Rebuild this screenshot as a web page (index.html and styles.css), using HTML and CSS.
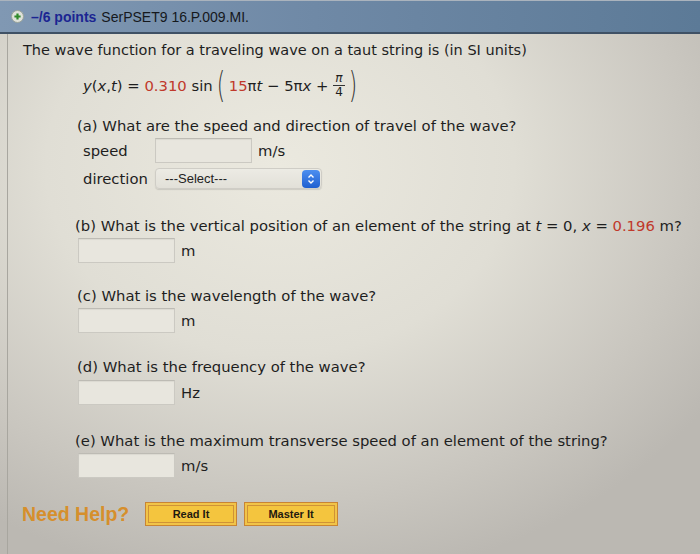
FILE: index.html
```html
<!DOCTYPE html>
<html>
<head>
<meta charset="utf-8">
<link rel="stylesheet" href="styles.css">
</head>
<body>
<div class="header">
  <span class="plus"><svg width="13" height="13" viewBox="0 0 13 13"><circle cx="6.5" cy="6.5" r="6" fill="#dfe2da" stroke="#9aa39a" stroke-width="1"/><path d="M6.5 3.4v6.2M3.4 6.5h6.2" stroke="#2f8a2a" stroke-width="2.2"/></svg></span>
  <span class="pts">–/6 points</span>
  <span class="code">SerPSET9 16.P.009.MI.</span>
</div>
<div class="main">
  <p class="intro">The wave function for a traveling wave on a taut string is (in SI units)</p>
  <div class="eq">
    <span><i>y</i>(<i>x</i>,<i>t</i>) = <span class="red">0.310</span> sin</span>
    <span class="paren">(</span>
    <span><span class="red">15</span>π<i>t</i> − 5π<i>x</i> +</span>
    <span class="frac"><span class="num">π</span><span class="den">4</span></span>
    <span class="paren">)</span>
  </div>

  <div class="part pa">
    <div class="q">(a) What are the speed and direction of travel of the wave?</div>
    <div class="row r-speed"><span class="lbl">speed</span><span class="inp"></span><span class="unit">m/s</span></div>
    <div class="row r-dir"><span class="lbl">direction</span><span class="sel"><span class="seltext">---Select---</span><span class="step"><svg width="8" height="12" viewBox="0 0 8 12"><path d="M1.5 4.5L4 2L6.5 4.5M1.5 7.5L4 10L6.5 7.5" fill="none" stroke="#fff" stroke-width="1.4"/></svg></span></span></div>
  </div>

  <div class="part pb">
    <div class="q">(b) What is the vertical position of an element of the string at <i>t</i> = 0, <i>x</i> = <span class="red">0.196</span> m?</div>
    <div class="row ans"><span class="inp"></span><span class="unit">m</span></div>
  </div>

  <div class="part pc">
    <div class="q">(c) What is the wavelength of the wave?</div>
    <div class="row ans"><span class="inp"></span><span class="unit">m</span></div>
  </div>

  <div class="part pd">
    <div class="q">(d) What is the frequency of the wave?</div>
    <div class="row ans"><span class="inp"></span><span class="unit">Hz</span></div>
  </div>

  <div class="part pe">
    <div class="q">(e) What is the maximum transverse speed of an element of the string?</div>
    <div class="row ans"><span class="inp"></span><span class="unit">m/s</span></div>
  </div>

  <div class="help">
    <span class="need">Need Help?</span>
    <span class="btn b-read"><span>Read It</span></span>
    <span class="btn b-master"><span>Master It</span></span>
  </div>
</div>
</body>
</html>
```

FILE: styles.css
```css
html, body {
  margin: 0;
  padding: 0;
}
body {
  width: 700px;
  height: 554px;
  overflow: hidden;
  background: radial-gradient(ellipse 520px 420px at 40% 30%, #ebe9df 0%, #e0ded5 45%, #c9c6bf 80%, #bbb8b2 100%);
  font-family: "DejaVu Sans", Verdana, sans-serif;
  color: #1e1e1e;
  font-size: 14.8px;
}
.header {
  box-sizing: border-box;
  height: 34px;
  border-top: 1px solid #aab3bd;
  border-bottom: 2px solid #3f5165;
  background: linear-gradient(90deg, #8098b3 0%, #6f89a6 45%, #5c7a97 100%);
  display: flex;
  align-items: center;
  padding-left: 11px;
  font-family: "Liberation Sans", Arial, sans-serif;
  font-size: 14px;
}
.plus {
  display: flex;
  width: 13px;
  height: 13px;
  margin-right: 7px;
}
.pts {
  font-weight: bold;
  color: #1b2592;
  margin-right: 5px;
}
.code {
  color: #15181c;
}
.main {
  margin-left: 7px;
  border-left: 1px solid #a8a69f;
  height: 520px;
  padding-top: 7px;
  box-sizing: border-box;
}
.intro {
  margin: 0;
  padding-left: 15px;
  line-height: 18px;
  height: 18px;
  white-space: nowrap;
  font-size: 14.5px;
}
.eq {
  margin-top: 8px;
  height: 36px;
  padding-left: 75px;
  display: flex;
  align-items: center;
  gap: 4px;
  white-space: nowrap;
}
.eq i {
  font-style: italic;
}
.red {
  color: #c0392b;
}
.paren {
  font-size: 36px;
  line-height: 36px;
  font-weight: 200;
  transform: scaleX(0.6);
  color: #333;
  margin: 0 -3px;
}
.frac {
  display: inline-flex;
  flex-direction: column;
  align-items: center;
  font-size: 12px;
  line-height: 13px;
  margin-left: 1px;
}
.frac .num {
  border-bottom: 1px solid #333;
  padding: 0 2px;
  font-style: italic;
}
.part {
  padding-left: 69px;
}
.q {
  line-height: 18px;
  height: 18px;
  white-space: nowrap;
}
.pa { margin-top: 14px; }
.pb { margin-top: 28px; }
.pc { margin-top: 24px; }
.pd { margin-top: 25px; }
.pe { margin-top: 27px; }
.pb .q, .pe .q { margin-left: -2px; }
.row {
  display: flex;
  align-items: center;
}
.r-speed {
  margin-top: 3px;
  padding-left: 6px;
}
.r-dir {
  margin-top: 5px;
  padding-left: 6px;
}
.lbl {
  width: 72px;
}
.inp {
  width: 97px;
  height: 25px;
  box-sizing: border-box;
  border: 1px solid #cbc9c2;
  border-top-color: #bdbbb4;
  background: #e8e6de;
  box-shadow: inset 0 1px 1px rgba(0,0,0,0.06);
}
.unit {
  margin-left: 6px;
}
.ans {
  margin-top: 3px;
  padding-left: 1px;
}
.pd .ans { margin-top: 4px; }
.sel {
  width: 167px;
  height: 21px;
  box-sizing: border-box;
  display: flex;
  align-items: center;
  justify-content: space-between;
  border-radius: 4px;
  border: 1px solid #cfcdc6;
  background: linear-gradient(#ecebe4, #e2e0d8);
  box-shadow: 0 1px 1px rgba(0,0,0,0.12);
  padding: 0 1px 0 9px;
  font-family: "Liberation Sans", Arial, sans-serif;
  font-size: 13px;
  color: #222;
}
.step {
  width: 18px;
  height: 18px;
  border-radius: 4px;
  background: linear-gradient(#4d8ff0, #1f5fd0);
  display: flex;
  align-items: center;
  justify-content: center;
}
.help {
  margin-top: 24px;
  padding-left: 14px;
  display: flex;
  align-items: center;
  font-family: "Liberation Sans", Arial, sans-serif;
}
.need {
  color: #d68f2c;
  font-weight: bold;
  font-size: 19.5px;
  width: 123px;
}
.btn {
  height: 24px;
  box-sizing: border-box;
  border: 1px solid #c98433;
  background: #f1c448;
  padding: 2px;
  display: flex;
  margin-right: 7px;
}
.btn span {
  flex: 1;
  border: 1px solid #cf9237;
  background: #f4c53e;
  display: flex;
  align-items: center;
  justify-content: center;
  font-size: 11px;
  font-weight: bold;
  color: #1f1a10;
}
.b-read { width: 92px; }
.b-master { width: 94px; }
```
